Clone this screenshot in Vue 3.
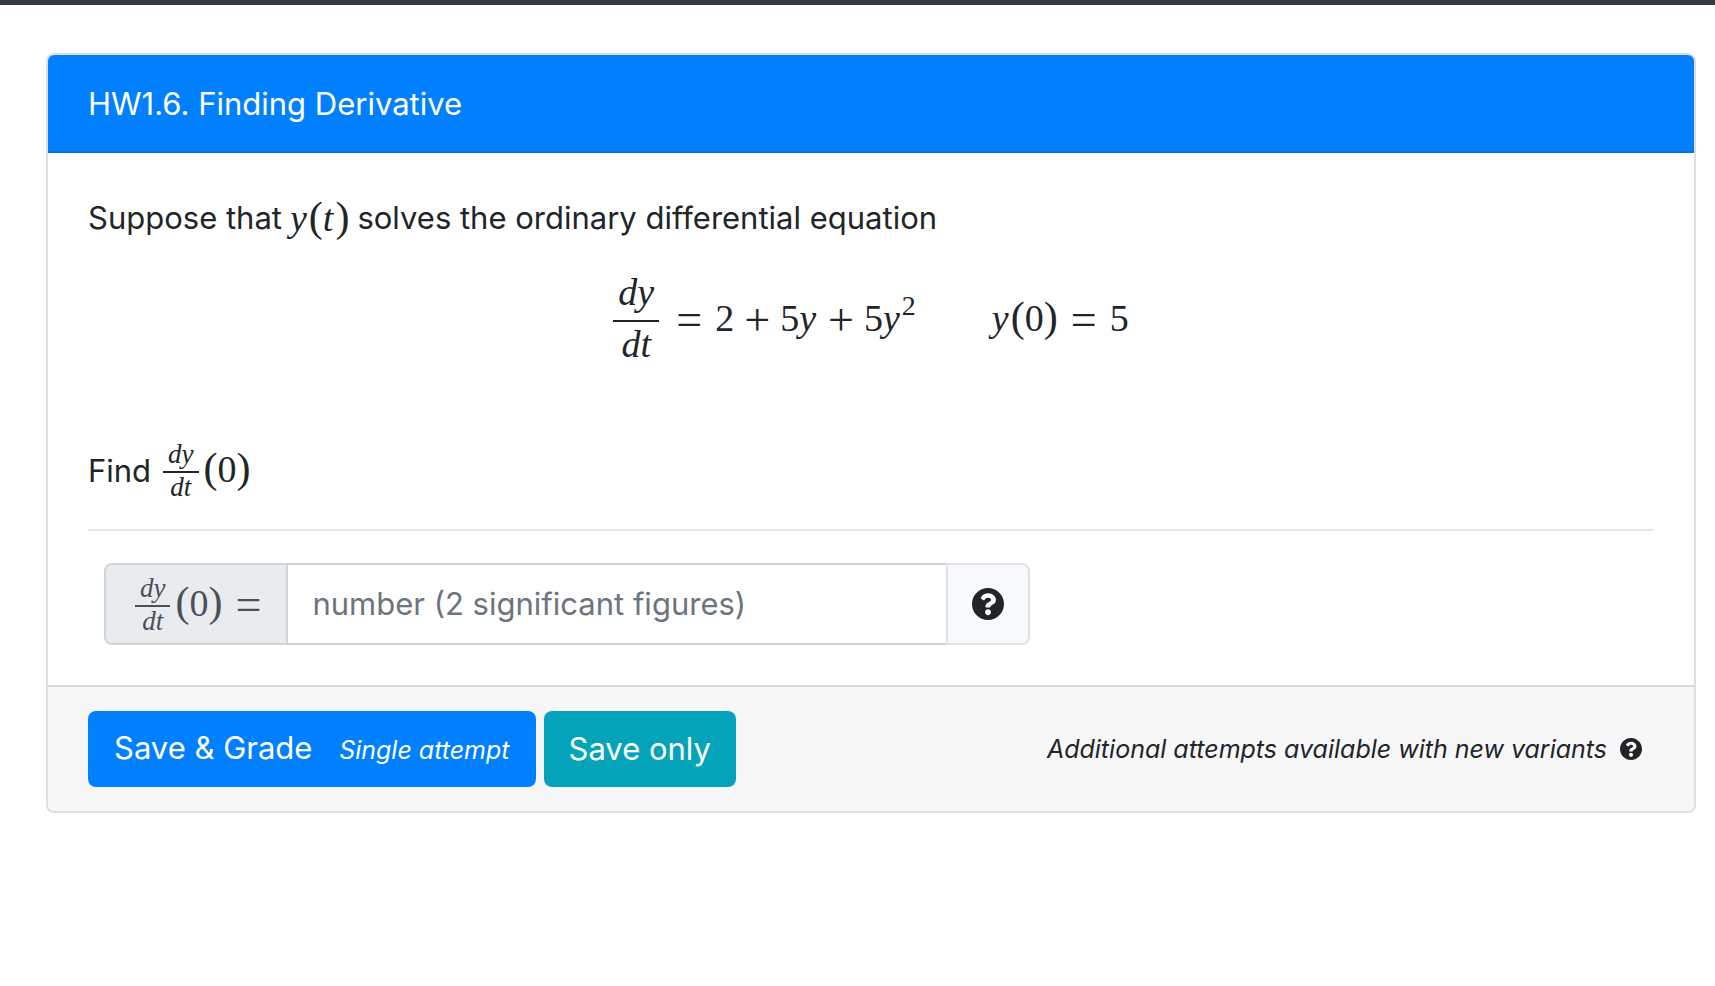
<template>
  <div class="page">
    <div class="topbar"></div>

    <form class="card" @submit.prevent="save('grade')">
      <h1 class="card-header">HW1.6. Finding Derivative</h1>

      <div class="card-body">
        <p class="line">
          <span>Suppose that</span>
          <span class="math"><i class="var">y</i><span class="paren">(</span><i class="var">t</i><span class="paren">)</span></span>
          <span>solves the ordinary differential equation</span>
        </p>

        <!-- Display equation -->
        <div class="equation">
          <span class="frac">
            <span class="num"><i>dy</i></span>
            <span class="den"><i>dt</i></span>
          </span>
          <span class="math"><span class="op rel">=</span>2<span class="op">+</span>5<i class="var">y</i><span class="op">+</span>5<i class="var">y</i><sup>2</sup></span>
          <span class="math cond"><i class="var">y</i><span class="paren">(</span>0<span class="paren">)</span><span class="op rel">=</span>5</span>
        </div>

        <p class="line find">
          <span>Find</span>
          <span class="inline-math">
            <span class="frac small">
              <span class="num"><i>dy</i></span>
              <span class="den"><i>dt</i></span>
            </span>
            <span class="math"><span class="paren">(</span>0<span class="paren">)</span></span>
          </span>
        </p>

        <hr class="divider" />

        <!-- Answer -->
        <div class="input-group">
          <label class="prepend" for="answer">
            <span class="frac small">
              <span class="num"><i>dy</i></span>
              <span class="den"><i>dt</i></span>
            </span>
            <span class="math"><span class="paren">(</span>0<span class="paren">)</span><span class="op rel">=</span></span>
          </label>
          <input id="answer" v-model="answer" class="input" type="text" autocomplete="off" placeholder="number (2 significant figures)" />
          <button class="append" type="button" aria-label="Input help">
            <svg class="icon" viewBox="8 8 496 496" aria-hidden="true"><path :d="questionCircle" /></svg>
          </button>
        </div>
      </div>

      <div class="card-footer">
        <div class="actions">
          <button class="btn primary" type="submit">Save &amp; Grade <small class="attempt">Single attempt</small></button>
          <button class="btn info" type="button" @click="save('save')">Save only</button>
        </div>
        <div class="variants">
          <em>Additional attempts available with new variants</em>
          <button class="help" type="button" aria-label="About attempts">
            <svg class="icon" viewBox="8 8 496 496" aria-hidden="true"><path :d="questionCircle" /></svg>
          </button>
        </div>
      </div>
    </form>
  </div>
</template>

<script setup>
import { ref } from 'vue'

const answer = ref('')
const lastAction = ref(null)

const questionCircle = 'M504 256c0 136.997-111.043 248-248 248S8 392.997 8 256C8 119.083 119.043 8 256 8s248 111.083 248 248zM262.655 90c-54.497 0-89.255 22.957-116.549 63.758-3.536 5.286-2.353 12.415 2.715 16.258l34.699 26.31c5.205 3.947 12.621 3.008 16.665-2.122 17.864-22.658 30.113-35.797 57.303-35.797 20.429 0 45.698 13.148 45.698 32.958 0 14.976-12.363 22.667-32.534 33.976C247.128 238.528 216 254.941 216 296v4c0 6.627 5.373 12 12 12h56c6.627 0 12-5.373 12-12v-1.333c0-28.462 83.186-29.647 83.186-106.667 0-58.002-60.165-102-116.531-102zM256 338c-25.365 0-46 20.635-46 46 0 25.364 20.635 46 46 46s46-20.636 46-46c0-25.365-20.635-46-46-46z'

function save(action) {
  lastAction.value = { action, answer: answer.value.trim() }
}
</script>

<style>
body{margin:0;background:#fff}
</style>

<style scoped>
*{box-sizing:border-box}
.page{font-family:Inter,"Liberation Sans",sans-serif;font-size:31px;line-height:48px;color:#212529}
.topbar{height:5px;background:#343a40}
.card{margin:48px 19px 48px 46px;border:2px solid #dfdfdf;border-radius:8px;background:#fff;overflow:hidden}
.card-header{margin:0;padding:25px 40px 23px;border-bottom:2px solid #0071e1;background:#0080ff;color:#fff;font-size:31px;font-weight:400}
.card-body{padding:41px 40px 40px}
.line{display:flex;align-items:center;gap:8px;margin:0}

/* Math */
.math{font-family:"Liberation Serif",serif;font-size:38px;line-height:48px;padding-bottom:6px;white-space:nowrap}
.line > .math{height:48px}
.var{padding-right:2px}
.paren{font-size:42px;line-height:1px}
.op{font-size:46px;line-height:1px;margin:0 10px;vertical-align:-4px}
.op.rel{margin:0 13px}
sup{font-size:28px;line-height:1px;vertical-align:16px}
.frac{display:inline-flex;flex-direction:column;font-family:"Liberation Serif",serif;font-size:38px;line-height:40px;text-align:center}
.num{padding:0 5px 8px;border-bottom:2px solid currentColor}
.den{padding:2px 5px 6px}
.frac.small{font-size:27px;line-height:28px}
.frac.small .num{padding-bottom:3px}
.frac.small .den{padding:0 5px 3px}
.equation{display:flex;justify-content:center;align-items:center;gap:4px;margin-top:30px}
.cond{margin-left:72px}
.find{gap:12px;margin-top:70px}
.find > span:first-child{padding-bottom:2px}
.inline-math{display:flex;align-items:center;gap:5px}
.divider{height:2px;margin:25px 0 32px;border:0;background:#e5e5e5}

/* Answer field */
.input-group{display:flex;max-width:926px;height:82px;margin-left:16px}
.prepend{display:flex;align-items:center;gap:5px;padding:4px 12px 0 29px;border:2px solid #ced4da;border-right:0;border-radius:8px 0 0 8px;background:#e9ecef;color:#495057}
.input{flex:1;min-width:0;padding:0 24px;border:2px solid #ced4da;border-right:0;border-radius:0;background:#fff;color:#495057;font:inherit;outline:0}
.input::placeholder{color:#6c757d;opacity:1}
.append{display:flex;align-items:center;justify-content:center;width:84px;padding:0;border:2px solid #dee2e6;border-radius:0 8px 8px 0;background:#f8f9fa;color:#212529;cursor:pointer}
.icon{display:block;width:32px;height:32px;fill:currentColor}

/* Footer */
.card-footer{display:flex;align-items:center;justify-content:space-between;padding:24px 40px;border-top:2px solid #d8d8d8;background:#f7f7f7}
.actions{display:flex;gap:8px}
.btn{height:76px;padding:0 26px;border:0;border-radius:8px;color:#fff;font:inherit;white-space:nowrap;cursor:pointer}
.btn.primary{background:#0080ff}
.btn.info{padding:0 25px;background:#03a4b9}
.attempt{margin-left:18px;font-size:25px;font-style:italic}
.variants{display:flex;align-items:center;gap:13px;padding-right:12px;font-size:25px}
.help{padding:0;border:0;background:none;color:inherit;cursor:pointer}
.help .icon{width:22px;height:22px}
</style>
